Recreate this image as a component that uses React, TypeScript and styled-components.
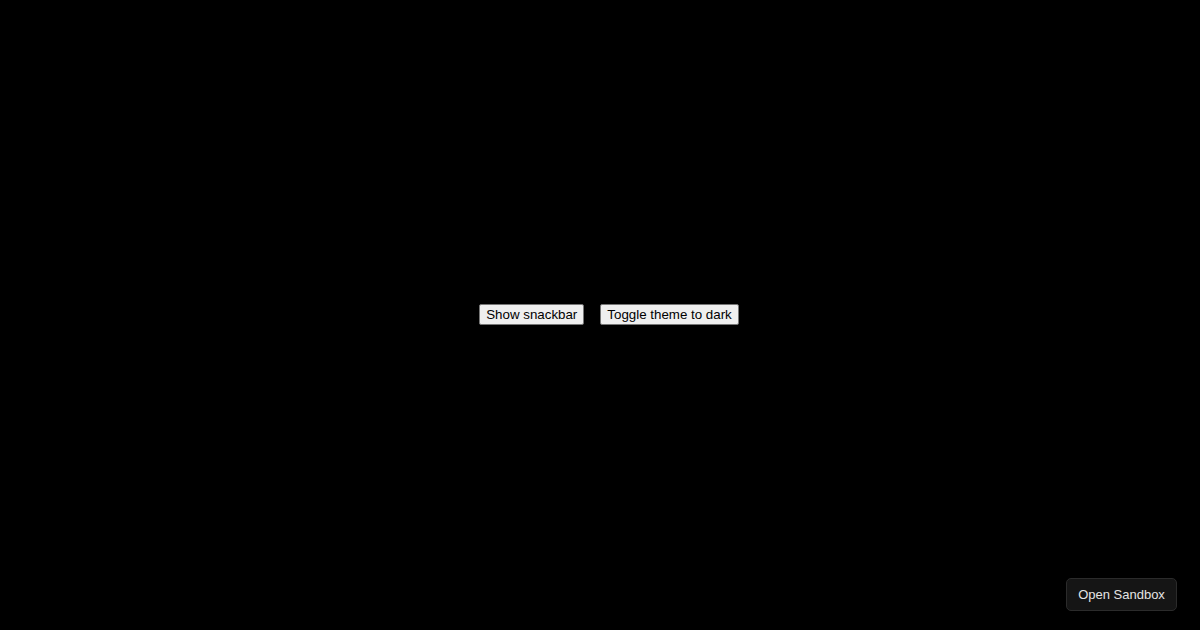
import React from "react";
import styled, { createGlobalStyle } from "styled-components";

const Global = createGlobalStyle`
  html, body { margin: 0; padding: 0; background: #000; }
  #root { min-height: 100vh; }
`;

const Stage = styled.main`
  box-sizing: border-box;
  width: 1200px;
  height: 630px;
  padding-left: 18px;
  padding-bottom: 2px;
  display: flex;
  align-items: center;
  justify-content: center;
  gap: 16px;
`;

const NativeButton = styled.button`
  font-family: "Liberation Sans", Arial, sans-serif;
  font-size: 13.333px;
  line-height: 17px;
  color: #000;
  background: #efefef;
  border: 1px solid #767676;
  border-radius: 2px;
  padding: 1px 6px;
  margin: 0;
  cursor: pointer;
`;

const SandboxLink = styled.a`
  position: fixed;
  right: 23px;
  bottom: 19px;
  box-sizing: border-box;
  height: 33px;
  width: 111px;
  display: flex;
  align-items: center;
  justify-content: center;
  background: #151515;
  border: 1px solid #2b2b2b;
  border-radius: 5px;
  color: #e4e4e4;
  font-family: "Liberation Sans", Arial, sans-serif;
  font-size: 13px;
  text-decoration: none;
`;

export default function App() {
  return (
    <>
      <Global />
      <Stage>
        <NativeButton>Show snackbar</NativeButton>
        <NativeButton>Toggle theme to dark</NativeButton>
      </Stage>
      <SandboxLink href="#">Open Sandbox</SandboxLink>
    </>
  );
}
